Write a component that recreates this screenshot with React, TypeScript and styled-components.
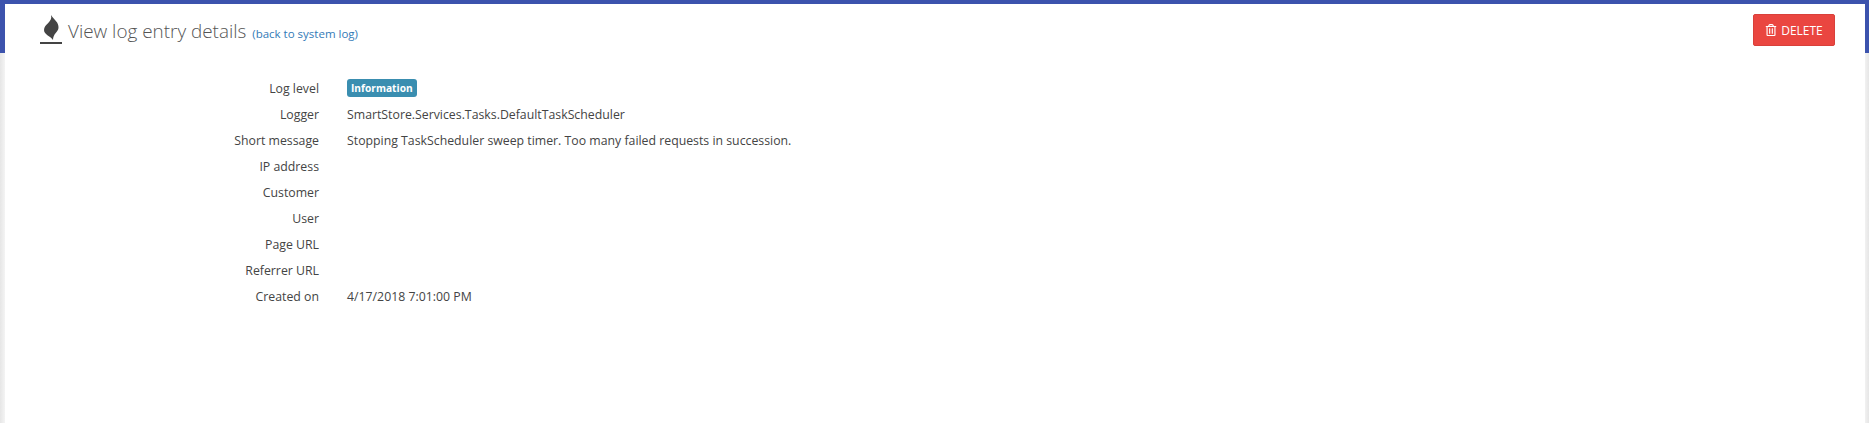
import React from "react";
import styled, { createGlobalStyle } from "styled-components";
import { FaRegTrashAlt } from "react-icons/fa";

const Global = createGlobalStyle`
  html, body { margin: 0; padding: 0; height: 100%; background: #fff; }
  #root { height: 100%; }
`;

const Page = styled.div`
  box-sizing: border-box;
  height: 423px;
  overflow: hidden;
  padding: 4px 4px 0 5px;
  background:
    linear-gradient(#3c53ad, #3c53ad) top left / 100% 53px no-repeat,
    linear-gradient(90deg, #e6e6e6, #f4f4f4 5px, #f4f4f4 1864px, #e6e6e6);
  font-family: "Open Sans", "Noto Sans", sans-serif;
  color: #444;
`;

const Panel = styled.main`
  height: 100%;
  background: #fff;
  box-sizing: border-box;
`;

const Header = styled.header`
  display: flex;
  align-items: flex-start;
  justify-content: space-between;
  padding: 10px 30px 0 35px;
`;

const TitleGroup = styled.div`
  display: flex;
  align-items: baseline;
`;

const LogoWrap = styled.span`
  align-self: flex-start;
  display: block;
  width: 23px;
  height: 30px;
  margin: 1px 5px 0 0;
`;

const Title = styled.h1`
  margin: 1px 0 0;
  font-size: 18.9px;
  font-weight: 300;
  line-height: 32px;
  color: #555;
`;

const BackLink = styled.a`
  margin-left: 6px;
  font-size: 11.5px;
  color: #337ab7;
  text-decoration: none;
`;

const DeleteButton = styled.button`
  display: flex;
  align-items: center;
  justify-content: center;
  gap: 4px;
  width: 82px;
  height: 32px;
  padding: 0;
  border: 1px solid #d9403a;
  border-radius: 2px;
  background: #ea4640;
  color: #fff;
  font-family: inherit;
  font-size: 12px;
`;

const Details = styled.dl`
  display: grid;
  grid-template-columns: 314px 1fr;
  column-gap: 28px;
  grid-auto-rows: 26px;
  align-items: center;
  margin: 28px 0 0;
  font-size: 12.3px;
`;

const Label = styled.dt`
  text-align: right;
`;

const Value = styled.dd`
  margin: 0;
  min-height: 1px;
`;

const Badge = styled.span`
  display: inline-block;
  padding: 0 4px;
  border-radius: 3px;
  background: #3a8eb0;
  color: #fff;
  font-size: 10.2px;
  font-weight: 700;
  line-height: 18px;
  vertical-align: middle;
`;

const Logo = () => (
  <svg width="23" height="30" viewBox="0 0 23 30">
    <path
      fill="#444"
      d="M11 0C14 5 19 7 18.5 13C18 17 13 19 13 25C11 21 4 20 4 15C4 9 13 7 11 0Z"
    />
    <rect x="0" y="27" width="22" height="2" fill="#444" />
  </svg>
);

const rows: [string, React.ReactNode][] = [
  ["Log level", <Badge>Information</Badge>],
  ["Logger", "SmartStore.Services.Tasks.DefaultTaskScheduler"],
  ["Short message", "Stopping TaskScheduler sweep timer. Too many failed requests in succession."],
  ["IP address", ""],
  ["Customer", ""],
  ["User", ""],
  ["Page URL", ""],
  ["Referrer URL", ""],
  ["Created on", "4/17/2018 7:01:00 PM"],
];

export default function App() {
  return (
    <Page>
      <Global />
      <Panel>
        <Header>
          <TitleGroup>
            <LogoWrap><Logo /></LogoWrap>
            <Title>View log entry details</Title>
            <BackLink href="#">(back to system log)</BackLink>
          </TitleGroup>
          <DeleteButton><FaRegTrashAlt size={12} />DELETE</DeleteButton>
        </Header>
        <Details>
          {rows.map(([label, value]) => (
            <React.Fragment key={label}>
              <Label>{label}</Label>
              <Value>{value}</Value>
            </React.Fragment>
          ))}
        </Details>
      </Panel>
    </Page>
  );
}
